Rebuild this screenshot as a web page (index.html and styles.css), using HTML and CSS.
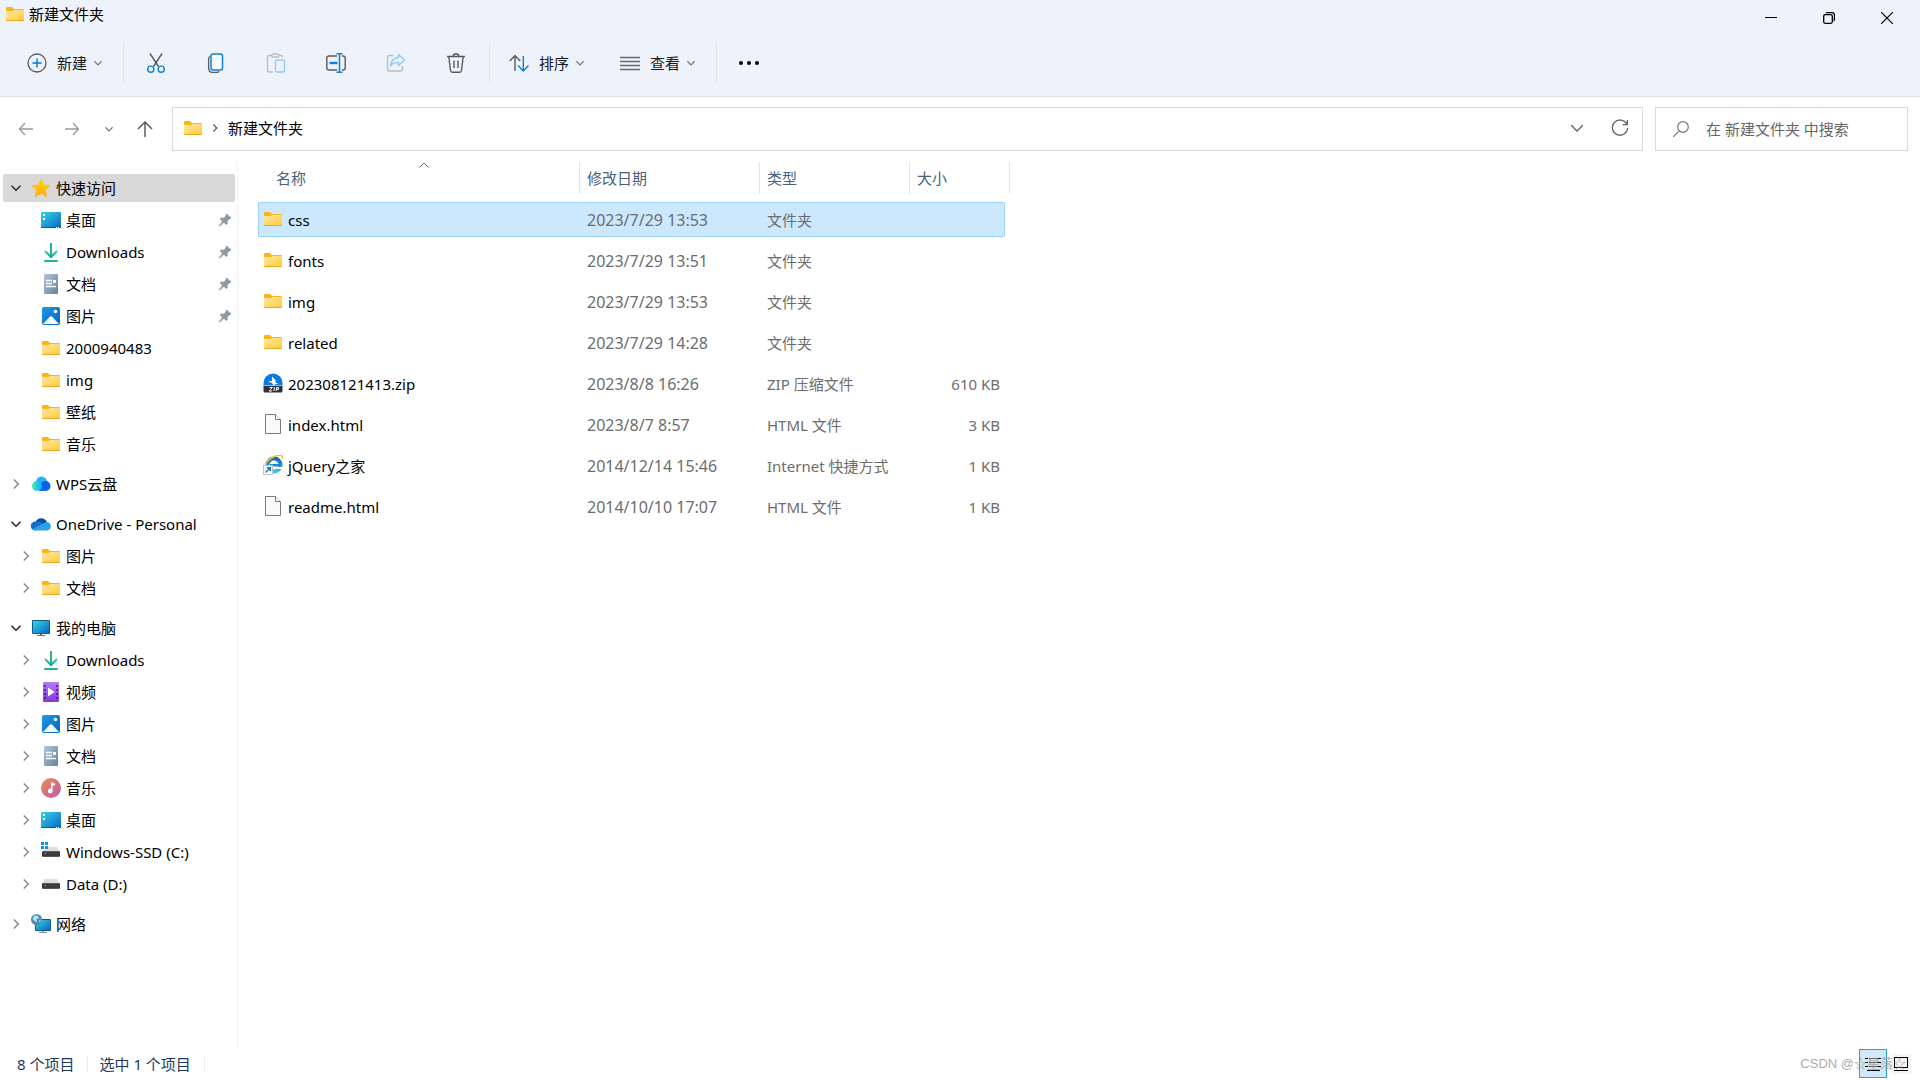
FILE: index.html
```html
<!DOCTYPE html>
<html lang="zh-CN">
<head>
  <meta charset="utf-8">
  <title>新建文件夹</title>
  <link rel="stylesheet" href="styles.css">
</head>
<body>
  <svg class="defs" width="0" height="0">
    <defs>
      <linearGradient id="gFolder" x1="0" y1="0" x2="1" y2="1"><stop offset="0" stop-color="#ffe9a0"/><stop offset="1" stop-color="#ffca3a"/></linearGradient>
      <linearGradient id="gDesk" x1="0" y1="0" x2="1" y2="1"><stop offset="0" stop-color="#34d6e6"/><stop offset="1" stop-color="#0a66c2"/></linearGradient>
      <linearGradient id="gDown" x1="0" y1="0" x2="0" y2="1"><stop offset="0" stop-color="#3ccf86"/><stop offset="1" stop-color="#0f9fa8"/></linearGradient>
      <linearGradient id="gDoc" x1="0" y1="0" x2="1" y2="1"><stop offset="0" stop-color="#b4c6da"/><stop offset="1" stop-color="#64829f"/></linearGradient>
      <linearGradient id="gPic" x1="0" y1="0" x2="1" y2="1"><stop offset="0" stop-color="#1c9be6"/><stop offset="1" stop-color="#0a63bd"/></linearGradient>
      <linearGradient id="gStar" x1="0" y1="0" x2="0" y2="1"><stop offset="0" stop-color="#ffd600"/><stop offset="1" stop-color="#ffae0d"/></linearGradient>
      <linearGradient id="gWps" x1="0" y1="0" x2="1" y2="0"><stop offset="0" stop-color="#3cf0b4"/><stop offset="1" stop-color="#18a8f8"/></linearGradient>
      <linearGradient id="gVideo" x1="0" y1="0" x2="0" y2="1"><stop offset="0" stop-color="#b77af5"/><stop offset="1" stop-color="#8436de"/></linearGradient>
      <linearGradient id="gMusic" x1="0" y1="0" x2="1" y2="1"><stop offset="0" stop-color="#f58a4c"/><stop offset="1" stop-color="#b45cb0"/></linearGradient>
      <linearGradient id="gIe" x1="0" y1="0" x2="0" y2="1"><stop offset="0" stop-color="#1467ae"/><stop offset="1" stop-color="#35c3f2"/></linearGradient>
    </defs>
    <symbol id="folder" viewBox="0 0 20 20">
      <path d="M1 4a1 1 0 0 1 1-1h5l2 2h9a1 1 0 0 1 1 1v5H1z" fill="#f8b61c"/>
      <path d="M1 7h7l1-1h10v10a1 1 0 0 1-1 1H2a1 1 0 0 1-1-1z" fill="url(#gFolder)"/>
      <path d="M1 16h18a1 1 0 0 1-1 1H2a1 1 0 0 1-1-1z" fill="#e9a820"/>
    </symbol>
    <symbol id="star" viewBox="0 0 20 20">
      <path d="M10 1l2.600 6 6.400.6-4.800 4.300 1.400 6.500L10 15.200l-5.600 3.200 1.400-6.500L1 7.600 7.400 7z" fill="url(#gStar)" stroke="url(#gStar)" stroke-linejoin="round"/>
    </symbol>
    <symbol id="desktop" viewBox="0 0 20 20">
      <rect x="0" y="2" width="20" height="16" rx="1" fill="url(#gDesk)"/>
      <path d="M0 17h20v0a1 1 0 0 1-1 1H1a1 1 0 0 1-1-1z" fill="#07599f"/>
      <path d="M2 4h2v2H2zM2 8h2v2H2z" fill="#fff"/>
      <path d="M15 17h1v1h-1zM17 17h1v1h-1z" fill="#fff"/>
    </symbol>
    <symbol id="download" viewBox="0 0 20 20">
      <path d="M10 1v13" stroke="#22b598" stroke-width="2"/>
      <path d="M4 9l6 6 6-6" stroke="url(#gDown)" stroke-width="2" fill="none"/>
      <rect x="3" y="18" width="14" height="2" rx="1" fill="#1fb58e"/>
    </symbol>
    <symbol id="document" viewBox="0 0 20 20">
      <rect x="3" y="0" width="14" height="20" rx="1" fill="url(#gDoc)"/>
      <path d="M5 6.500h6M5 9.500h6M5 12.500h10" stroke="#fff" stroke-width="1.500"/>
      <rect x="12" y="6" width="3" height="3" fill="#fff"/>
    </symbol>
    <symbol id="picture" viewBox="0 0 20 20">
      <rect x="1" y="1" width="18" height="18" rx="2" fill="url(#gPic)"/>
      <path d="M2 18l7-7.400q1-.9 2 0l7 7.400z" fill="#f4faff"/>
      <circle cx="14.500" cy="5.500" r="1.700" fill="#fff"/>
    </symbol>
    <symbol id="wps" viewBox="0 0 20 20">
      <circle cx="10.500" cy="8" r="5.500" fill="#22b0ff"/>
      <circle cx="14.500" cy="12" r="5" fill="#0b62e8"/>
      <path d="M8 17h7l-5-6z" fill="#0d6cf0"/>
      <circle cx="6" cy="12" r="5" fill="url(#gWps)"/>
    </symbol>
    <symbol id="onedrive" viewBox="0 0 20 20">
      <path d="M4.500 8a6.200 6.200 0 0 1 11.300-.3L11 13 3 10z" fill="#0a4fa5"/>
      <path d="M4.500 7.500q3-1 5.500 1l4 4-10 4A4.500 4.500 0 0 1 4.500 7.500z" fill="#0f6fc9"/>
      <path d="M15.500 8a4.300 4.300 0 0 1 0 8.600H4.500a4 4 0 0 1-3-1.600l8.500-4.500z" fill="#28a3ea"/>
    </symbol>
    <symbol id="computer" viewBox="0 0 20 20">
      <rect x="1" y="2" width="18" height="14" rx="1" fill="#125c86"/>
      <rect x="2" y="3" width="16" height="12" fill="url(#gDesk)"/>
      <path d="M9 16h2v1h3v1H6v-1h3z" fill="#61707d"/>
    </symbol>
    <symbol id="video" viewBox="0 0 20 20">
      <rect x="2" y="0" width="16" height="20" rx="1" fill="url(#gVideo)"/>
      <path d="M7 5.500l6.500 4.500L7 14.500z" fill="#fff"/>
      <path d="M4 3v15M16 3v15" stroke="#4b1a94" stroke-width="1.600" stroke-dasharray="2 2"/>
    </symbol>
    <symbol id="music" viewBox="0 0 20 20">
      <circle cx="10" cy="10" r="10" fill="url(#gMusic)"/>
      <path d="M10 4l4 1.500v2.300l-2.400-.8v6a2.300 2.300 0 1 1-1.600-2.200z" fill="#fff"/>
    </symbol>
    <symbol id="drive" viewBox="0 0 20 20">
      <path d="M4 5h12l3 5H1z" fill="#dcdde0"/>
      <rect x="1" y="9" width="18" height="6" rx="1" fill="#58595b"/>
      <rect x="1" y="10" width="18" height="4" fill="#3b3c3e"/>
      <rect x="4" y="11" width="1" height="1" fill="#55f06a"/>
    </symbol>
    <symbol id="windrive" viewBox="0 0 20 20">
      <path d="M8 5h8l3 5H1z" fill="#dcdde0"/>
      <rect x="1" y="9" width="18" height="6" rx="1" fill="#58595b"/>
      <rect x="1" y="10" width="18" height="4" fill="#3b3c3e"/>
      <rect x="4" y="11" width="1" height="1" fill="#55f06a"/>
      <path d="M0 0h3v3H0zM4 0h3v3H4zM0 4h3v3H0zM4 4h3v3H4z" fill="#1391e6"/>
    </symbol>
    <symbol id="network" viewBox="0 0 20 20">
      <rect x="4" y="5" width="16" height="12" rx="1" fill="#125c86"/>
      <rect x="5" y="6" width="14" height="10" fill="url(#gDesk)"/>
      <path d="M11 17h2v1h3v1H8v-1h3z" fill="#8b98a3"/>
      <circle cx="5.500" cy="5.500" r="5.500" fill="#4a8db3"/>
      <path d="M3 1.500l4 .2 1 2.500-2.500 1L6 8l-2-.6L1.500 5z" fill="#b8dcea"/>
      <path d="M8 6l2.500-.5L8.500 9z" fill="#9bcbe0"/>
    </symbol>
    <symbol id="zip" viewBox="0 0 20 20">
      <path d="M.5 12.500V10a9.500 9.500 0 0 1 19 0v2.500z" fill="#0a7ae0"/>
      <path d="M9 3.500L12.500 7v2.500l3 1.500-3.500.2-1.500 1.300-1.500-2.500L5 8.500l4-.7z" fill="#fff"/>
      <path d="M.5 13h19v5a1.500 1.500 0 0 1-1.500 1.500H2A1.500 1.500 0 0 1 .5 18z" fill="#2d3238"/>
      <path d="M6.500 14.500h3l-3.500 3.500h3M11.500 14l-.7 4M13 18l.7-3.500h2l-.4 2h-2" stroke="#fff" fill="none"/>
    </symbol>
    <symbol id="file" viewBox="0 0 20 20">
      <path d="M2.500.5h10l5 5v14h-15z" fill="#fafafa" stroke="#7b7b7b"/>
      <path d="M12.500.5v5h5" fill="#fff" stroke="#7b7b7b"/>
    </symbol>
    <symbol id="ie" viewBox="0 0 20 20">
      <circle cx="11" cy="10" r="6.500" fill="none" stroke="url(#gIe)" stroke-width="4"/>
      <path d="M7 9h10v2.500H7z" fill="#1e86cc"/>
      <path d="M14 12h6v2h-6z" fill="#fff"/>
      <path d="M2.500 8.500C6 3 16-1.500 19 .8c.9.800.6 2.200 0 3.200" fill="none" stroke="#f2c230" stroke-width="1.500"/>
      <rect x=".5" y="10.500" width="9" height="9" fill="#fff" stroke="#c4c4c4"/>
      <path d="M2.500 17.500l4.500-4.500M3.800 12.700h3.500v3.500" fill="none" stroke="#0d74cf" stroke-width="1.400"/>
    </symbol>
    <symbol id="pin" viewBox="0 0 14 14">
      <path d="M8.600.5l4.900 4.500-1 1-1-.1-2 2.300.3 2.600-1.300 1.300-2.600-2.300L1.500 13.500.5 13l3.700-4.500L1.800 6l1.300-1.400 2.700.1L7.900 2.500l-.2-1z" fill="#8f9ba3"/>
    </symbol>
    <symbol id="down" viewBox="0 0 10 10"><path d="M.5 2.800L5 7.300l4.500-4.500" fill="none" stroke="currentColor" stroke-width="1.500"/></symbol>
    <symbol id="right" viewBox="0 0 10 10"><path d="M2.800.5L7.300 5 2.800 9.500" fill="none" stroke="currentColor" stroke-width="1.500"/></symbol>
  </svg>

  <header class="ribbon">
    <div class="titlebar">
      <svg class="icon"><use href="#folder"/></svg>
      <h1>新建文件夹</h1>
      <div class="controls">
        <button aria-label="最小化"><svg width="12" height="12"><path d="M0 5.500h12" stroke="#000"/></svg></button>
        <button aria-label="还原"><svg width="12" height="12" fill="none" stroke="#000"><rect x=".7" y="2.700" width="8.600" height="8.600" rx="1.500" stroke-width="1.300"/><path d="M3 1.200Q3.300.6 4.500.6H9Q11.400.6 11.400 3v4.500q0 1.200-.9 1.500" stroke-width="1.200"/></svg></button>
        <button aria-label="关闭"><svg width="12" height="12"><path d="M0 0l12 12M12 0L0 12" stroke="#000" stroke-width="1.200"/></svg></button>
      </div>
    </div>

    <div class="toolbar">
      <button class="menu">
        <svg width="20" height="20" fill="none"><circle cx="10" cy="10" r="9" stroke="#5a5a5a" stroke-width="1.300"/><path d="M10 5.500v9M5.500 10h9" stroke="#0078d4" stroke-width="1.400"/></svg>
        新建
        <svg class="tiny"><use href="#down"/></svg>
      </button>
      <span class="line"></span>
      <button class="tool" aria-label="剪切"><svg width="20" height="20" fill="none" stroke-width="1.400"><path d="M4 .5l8.500 13M16 .5l-8.500 13" stroke="#5a5a5a"/><circle cx="4.800" cy="16.200" r="3.100" stroke="#0f7fd8"/><circle cx="15.200" cy="16.200" r="3.100" stroke="#0f7fd8"/></svg></button>
      <button class="tool" aria-label="复制"><svg width="20" height="20" fill="none"><path d="M4 3.500Q2.600 4 2.600 6v9q0 4.300 4 4.300h4q2 0 2.600-1" stroke="#5a5a5a" stroke-width="1.300"/><rect x="5" y="1" width="11.500" height="16" rx="2" fill="#fafbfd" stroke="#0f7fd8" stroke-width="1.500"/></svg></button>
      <button class="tool" aria-label="粘贴" disabled><svg width="20" height="20" fill="none" stroke-width="1.300"><path d="M7 19H3Q1.500 19 1.500 17.500V4Q1.500 2.500 3 2.500h2.500M13 2.500h2Q16.500 2.500 16.500 4" stroke="#b9bdc2"/><rect x="5.500" y="1" width="7.500" height="3" rx="1.500" stroke="#b9bdc2"/><rect x="9.500" y="7" width="9" height="12" rx="1.500" stroke="#94c6ee"/></svg></button>
      <button class="tool" aria-label="重命名"><svg width="20" height="20" fill="none"><path d="M11 3H3Q.8 3 .8 5v10q0 2 2.200 2h8M16 3h1q2.200 0 2.200 2v10q0 2-2.200 2h-1" stroke="#5a5a5a" stroke-width="1.400"/><path d="M13.500 1v18.500M10.500.7h6M10.500 19.300h6" stroke="#0f7fd8" stroke-width="1.500"/><path d="M3.500 10h8" stroke="#0f7fd8" stroke-width="2.400"/></svg></button>
      <button class="tool" aria-label="共享" disabled><svg width="20" height="20" fill="none" stroke-width="1.400"><path d="M7.500 2.500h-4Q1.500 2.500 1.500 5v10.500q0 2.500 2.500 2.500h10q2.500 0 2.500-2.500v-2.500" stroke="#b9bdc2"/><path d="M12.500 1.500l6 5.500-6 5.500V9.500Q7 9 4.500 13 5 5.500 12.500 4.500z" stroke="#94c6ee" stroke-linejoin="round"/></svg></button>
      <button class="tool" aria-label="删除"><svg width="20" height="20" fill="none" stroke="#5a5a5a" stroke-width="1.400"><path d="M1 3.500h18M7 3.300Q7.500.8 10 .8t3 2.500M2.800 3.500l1.700 14q.2 1.800 2 1.800h7q1.800 0 2-1.800l1.700-14M8 7.500V15M12 7.500V15"/></svg></button>
      <span class="line"></span>
      <button class="menu">
        <svg width="20" height="20" fill="none" stroke-width="1.400"><path d="M6 18V3M.8 8L6 2.500 11.200 8" stroke="#5a5a5a"/><path d="M14.300 3v15M9.100 12.500l5.200 5.500 5.200-5.500" stroke="#0f7fd8"/></svg>
        排序
        <svg class="tiny"><use href="#down"/></svg>
      </button>
      <button class="menu view">
        <svg width="20" height="20"><path d="M0 4.500h20M0 8.500h20M0 12.500h20M0 16.500h20" stroke="#66666a" stroke-width="1.300"/></svg>
        查看
        <svg class="tiny"><use href="#down"/></svg>
      </button>
      <span class="line"></span>
      <button class="tool" aria-label="查看更多"><svg width="20" height="20"><circle cx="2" cy="10" r="2"/><circle cx="10" cy="10" r="2"/><circle cx="18" cy="10" r="2"/></svg></button>
    </div>
  </header>

  <div class="address-row">
    <div class="history">
      <button class="back" aria-label="返回"><svg width="16" height="16" fill="none" stroke="#9a9a9a" stroke-width="1.300"><path d="M15 8H1.500M7 2L1.500 8 7 14"/></svg></button>
      <button class="forward" aria-label="前进"><svg width="16" height="16" fill="none" stroke="#9a9a9a" stroke-width="1.300"><path d="M1 8h13.500M9 2l5.500 6L9 14"/></svg></button>
      <button class="recent" aria-label="最近浏览的位置"><svg class="tiny"><use href="#down"/></svg></button>
      <button class="up" aria-label="上移"><svg width="16" height="16" fill="none" stroke="#5c5c5c" stroke-width="1.500"><path d="M8 16V1M1 8l7-7 7 7"/></svg></button>
    </div>
    <div class="address">
      <svg class="icon"><use href="#folder"/></svg>
      <svg class="sep"><use href="#right"/></svg>
      <a href="#">新建文件夹</a>
      <button class="drop" aria-label="以前的位置"><svg width="12" height="12"><path d="M0 3l6 6 6-6" fill="none" stroke="#666" stroke-width="1.400"/></svg></button>
      <button class="refresh" aria-label="刷新"><svg width="18" height="18" fill="none" stroke="#666" stroke-width="1.300"><path d="M15.700 5A7.600 7.600 0 1 0 16.600 9M16.300 1v4.700h-4.700"/></svg></button>
    </div>
    <label class="search">
      <svg width="16" height="16" fill="none" stroke="#777" stroke-width="1.200"><circle cx="10" cy="6" r="5.300"/><path d="M6.200 9.800L0 16"/></svg>
      <input type="text" placeholder="在 新建文件夹 中搜索" aria-label="搜索">
    </label>
  </div>

  <main>
    <nav>
      <ul class="group">
        <li><a class="root current" href="#"><svg class="arrow open"><use href="#down"/></svg><svg class="icon"><use href="#star"/></svg>快速访问</a></li>
        <li><a href="#"><span class="arrow"></span><svg class="icon"><use href="#desktop"/></svg>桌面<svg class="pin"><use href="#pin"/></svg></a></li>
        <li><a href="#"><span class="arrow"></span><svg class="icon"><use href="#download"/></svg>Downloads<svg class="pin"><use href="#pin"/></svg></a></li>
        <li><a href="#"><span class="arrow"></span><svg class="icon"><use href="#document"/></svg>文档<svg class="pin"><use href="#pin"/></svg></a></li>
        <li><a href="#"><span class="arrow"></span><svg class="icon"><use href="#picture"/></svg>图片<svg class="pin"><use href="#pin"/></svg></a></li>
        <li><a href="#"><span class="arrow"></span><svg class="icon"><use href="#folder"/></svg>2000940483</a></li>
        <li><a href="#"><span class="arrow"></span><svg class="icon"><use href="#folder"/></svg>img</a></li>
        <li><a href="#"><span class="arrow"></span><svg class="icon"><use href="#folder"/></svg>壁纸</a></li>
        <li><a href="#"><span class="arrow"></span><svg class="icon"><use href="#folder"/></svg>音乐</a></li>
      </ul>
      <ul class="group">
        <li><a class="root" href="#"><svg class="arrow"><use href="#right"/></svg><svg class="icon"><use href="#wps"/></svg>WPS云盘</a></li>
      </ul>
      <ul class="group">
        <li><a class="root" href="#"><svg class="arrow open"><use href="#down"/></svg><svg class="icon"><use href="#onedrive"/></svg>OneDrive - Personal</a></li>
        <li><a href="#"><svg class="arrow"><use href="#right"/></svg><svg class="icon"><use href="#folder"/></svg>图片</a></li>
        <li><a href="#"><svg class="arrow"><use href="#right"/></svg><svg class="icon"><use href="#folder"/></svg>文档</a></li>
      </ul>
      <ul class="group">
        <li><a class="root" href="#"><svg class="arrow open"><use href="#down"/></svg><svg class="icon"><use href="#computer"/></svg>我的电脑</a></li>
        <li><a href="#"><svg class="arrow"><use href="#right"/></svg><svg class="icon"><use href="#download"/></svg>Downloads</a></li>
        <li><a href="#"><svg class="arrow"><use href="#right"/></svg><svg class="icon"><use href="#video"/></svg>视频</a></li>
        <li><a href="#"><svg class="arrow"><use href="#right"/></svg><svg class="icon"><use href="#picture"/></svg>图片</a></li>
        <li><a href="#"><svg class="arrow"><use href="#right"/></svg><svg class="icon"><use href="#document"/></svg>文档</a></li>
        <li><a href="#"><svg class="arrow"><use href="#right"/></svg><svg class="icon"><use href="#music"/></svg>音乐</a></li>
        <li><a href="#"><svg class="arrow"><use href="#right"/></svg><svg class="icon"><use href="#desktop"/></svg>桌面</a></li>
        <li><a href="#"><svg class="arrow"><use href="#right"/></svg><svg class="icon"><use href="#windrive"/></svg>Windows-SSD (C:)</a></li>
        <li><a href="#"><svg class="arrow"><use href="#right"/></svg><svg class="icon"><use href="#drive"/></svg>Data (D:)</a></li>
      </ul>
      <ul class="group">
        <li><a class="root" href="#"><svg class="arrow"><use href="#right"/></svg><svg class="icon"><use href="#network"/></svg>网络</a></li>
      </ul>
    </nav>

    <section class="files">
      <table>
        <thead>
          <tr>
            <th class="name"><div>名称<svg class="sort" width="10" height="6"><path d="M.5 5.500L5 1l4.500 4.500" fill="none" stroke="#666"/></svg></div></th>
            <th class="date"><div>修改日期</div></th>
            <th class="type"><div>类型</div></th>
            <th class="size"><div>大小</div></th>
          </tr>
        </thead>
        <tbody>
          <tr class="selected"><td class="name"><div><svg class="icon"><use href="#folder"/></svg>css</div></td><td class="date">2023/7/29 13:53</td><td>文件夹</td><td class="size"></td></tr>
          <tr><td class="name"><div><svg class="icon"><use href="#folder"/></svg>fonts</div></td><td class="date">2023/7/29 13:51</td><td>文件夹</td><td class="size"></td></tr>
          <tr><td class="name"><div><svg class="icon"><use href="#folder"/></svg>img</div></td><td class="date">2023/7/29 13:53</td><td>文件夹</td><td class="size"></td></tr>
          <tr><td class="name"><div><svg class="icon"><use href="#folder"/></svg>related</div></td><td class="date">2023/7/29 14:28</td><td>文件夹</td><td class="size"></td></tr>
          <tr><td class="name"><div><svg class="icon"><use href="#zip"/></svg>202308121413.zip</div></td><td class="date">2023/8/8 16:26</td><td>ZIP 压缩文件</td><td class="size">610 KB</td></tr>
          <tr><td class="name"><div><svg class="icon"><use href="#file"/></svg>index.html</div></td><td class="date">2023/8/7 8:57</td><td>HTML 文件</td><td class="size">3 KB</td></tr>
          <tr><td class="name"><div><svg class="icon"><use href="#ie"/></svg>jQuery之家</div></td><td class="date">2014/12/14 15:46</td><td>Internet 快捷方式</td><td class="size">1 KB</td></tr>
          <tr><td class="name"><div><svg class="icon"><use href="#file"/></svg>readme.html</div></td><td class="date">2014/10/10 17:07</td><td>HTML 文件</td><td class="size">1 KB</td></tr>
        </tbody>
      </table>
    </section>
  </main>

  <footer>
    <span class="status">8 个项目</span>
    <span class="status">选中 1 个项目</span>
    <div class="views">
      <button class="active" aria-label="详细信息"><svg width="16" height="16"><path d="M0 2.500h3M4 2.500h12M0 6.500h3M4 6.500h12M0 10.500h3M4 10.500h12M2 14.500h13" stroke="#000"/></svg></button>
      <button aria-label="大图标"><svg width="14" height="16"><rect x=".5" y="1.500" width="13" height="10" fill="none" stroke="#000"/><path d="M0 14.500h14" stroke="#000"/></svg></button>
    </div>
    <span class="watermark">CSDN @☆星落☆</span>
  </footer>
</body>
</html>
```
FILE: styles.css
```css
* {
  box-sizing: border-box;
}

body {
  display: flex;
  flex-direction: column;
  min-height: 100vh;
  margin: 0;
  font-family: "Noto Sans", "Noto Sans CJK SC", sans-serif;
  font-size: 15px;
  line-height: 20px;
  color: #000;
  background-color: #fff;
}

button {
  display: flex;
  align-items: center;
  justify-content: center;
  padding: 0;
  border: none;
  background: none;
  font: inherit;
  color: inherit;
}

a {
  color: inherit;
  text-decoration: none;
}

svg {
  flex: none;
}

.defs {
  position: absolute;
}

.icon {
  width: 20px;
  height: 20px;
}

.tiny {
  width: 8px;
  height: 8px;
  color: #777;
}

/* title bar + toolbar */
.ribbon {
  background-color: #eef3fb;
  border-bottom: 1px solid #dadde3;
}

.titlebar {
  display: flex;
  align-items: center;
  height: 30px;
  padding: 0 4px 2px 5px;
}

.titlebar h1 {
  margin: 0 0 0 4px;
  font-size: 15px;
  font-weight: normal;
}

.controls {
  display: flex;
  align-self: flex-start;
  margin-left: auto;
}

.controls button {
  width: 58px;
  height: 36px;
}

.toolbar {
  display: flex;
  align-items: center;
  height: 66px;
  padding-left: 27px;
}

.menu {
  gap: 10px;
  height: 40px;
  color: #1a1a1a;
}

.menu .tiny {
  margin-left: -3px;
}

.view {
  margin-left: 36px;
}

.line {
  width: 1px;
  height: 40px;
  margin: 0 2px 0 21px;
  background-color: #dfe2e8;
}

.tool {
  width: 60px;
  height: 40px;
}

.tool + .line {
  margin: 0 19px 0 3px;
}

/* address bar */
.address-row {
  display: flex;
  align-items: center;
  padding: 10px 12px 0 0;
}

.history {
  display: flex;
  width: 172px;
  padding-left: 3px;
}

.history button {
  width: 46px;
  height: 40px;
}

.history .recent {
  width: 28px;
}

.history .up {
  width: 44px;
}

.address {
  display: flex;
  flex: 1;
  align-items: center;
  height: 44px;
  padding: 0 13px 2px 10px;
  border: 1px solid #d9d9d9;
}

.address .sep {
  width: 8px;
  height: 8px;
  margin: 0 9px 0 8px;
  color: #555;
}

.address .drop {
  width: 30px;
  height: 30px;
  margin-left: auto;
  margin-right: 19px;
}

.address .refresh {
  width: 18px;
  height: 30px;
}

.search {
  display: flex;
  align-items: center;
  width: 253px;
  height: 44px;
  margin-left: 12px;
  padding-left: 17px;
  border: 1px solid #d9d9d9;
}

.search input {
  flex: 1;
  min-width: 0;
  margin-left: 17px;
  padding: 0;
  border: none;
  outline: none;
  font: inherit;
}

.search input::placeholder {
  color: #666;
  opacity: 1;
}

main {
  display: flex;
  flex: 1;
}

/* folder tree */
nav {
  width: 238px;
  margin-top: 11px;
  padding-top: 12px;
  border-right: 1px solid #f3f3f3;
}

.group {
  margin: 0 0 12px;
  padding: 0;
  list-style: none;
}

nav a {
  display: flex;
  align-items: center;
  height: 28px;
  margin: 0 2px 4px 3px;
  padding: 0 3px 0 18px;
  border-radius: 2px;
}

nav .root {
  padding-left: 8px;
}

nav .current {
  background-color: #d9d9d9;
}

nav .arrow {
  width: 10px;
  height: 10px;
  color: #8a8a8a;
}

nav .open {
  color: #222;
}

nav .icon {
  margin: 0 5px 0 10px;
}

nav .pin {
  width: 14px;
  height: 14px;
  margin-left: auto;
}

/* file list */
.files {
  flex: 1;
  padding: 5px 0 0 20px;
}

table {
  width: 747px;
  table-layout: fixed;
  border-spacing: 0 6px;
}

th {
  height: 34px;
  padding: 0 0 2px;
  font-weight: normal;
  text-align: left;
  color: #4c607a;
}

th div {
  position: relative;
  height: 32px;
  padding-left: 7px;
  line-height: 32px;
  border-right: 1px solid #e3e3e3;
}

th.name {
  width: 322px;
}

th.name div {
  padding-left: 18px;
}

th.date {
  width: 180px;
}

th.type {
  width: 150px;
}

th.size div {
  margin-right: -5px;
}

.sort {
  position: absolute;
  top: 0;
  left: 50%;
}

td {
  height: 35px;
  padding: 0 0 0 7px;
  color: #6d6d6d;
}

td.name {
  padding-left: 5px;
  color: #000;
}

td.name div {
  display: flex;
  align-items: center;
  gap: 5px;
}

td .icon {
  margin-bottom: 2px;
}

td.date {
  font-size: 16px;
}

td.size {
  padding-right: 5px;
  text-align: right;
}

.selected td {
  background-color: #cce8ff;
  border: solid #99d1ff;
  border-width: 1px 0;
}

.selected td:first-child {
  padding-left: 4px;
  border-left-width: 1px;
  border-radius: 2px 0 0 2px;
}

.selected td:last-child {
  border-right-width: 1px;
  border-radius: 0 2px 2px 0;
}

/* status bar */
footer {
  position: relative;
  display: flex;
  align-items: center;
  height: 31px;
  padding: 0 9px 2px 17px;
  color: #1e395b;
}

.status {
  margin-right: 11px;
  padding-right: 13px;
  line-height: 14px;
  border-right: 1px solid #ececec;
}

.views {
  display: flex;
  align-items: center;
  gap: 4px;
  margin-left: auto;
}

.views button {
  width: 20px;
  height: 20px;
  background-color: #f5f5f5;
}

.views .active {
  width: 28px;
  height: 29px;
  background-color: #d0e9f7;
  border: 1px solid #26a0da;
}

.watermark {
  position: absolute;
  right: 14px;
  font-family: "Liberation Sans", "Noto Sans CJK SC", sans-serif;
  font-size: 13px;
  color: #999;
  opacity: 0.8;
}
```
